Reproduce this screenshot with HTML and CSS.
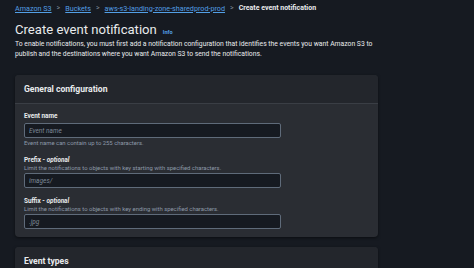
FILE: index.html
```html
<!DOCTYPE html>
<html lang="en">
<head>
    <meta charset="UTF-8">
    <meta name="viewport" content="width=device-width, initial-scale=1.0">
    <title>Create event notification</title>
    <link rel="stylesheet" href="styles.css">
</head>
<body>
    <div class="page">
        <nav class="breadcrumbs">
            <a href="#">Amazon S3</a>
            <span class="sep">&gt;</span>
            <a href="#">Buckets</a>
            <span class="sep">&gt;</span>
            <a href="#">aws-s3-landing-zone-sharedprod-prod</a>
            <span class="sep">&gt;</span>
            <span class="current">Create event notification</span>
        </nav>

        <div class="page-header">
            <h1>Create event notification</h1>
            <a href="#" class="info">Info</a>
        </div>
        <p class="intro">To enable notifications, you must first add a notification configuration that identifies the events you want Amazon S3 to publish and the destinations where you want Amazon S3 to send the notifications.</p>

        <section class="card">
            <div class="card-header">
                <h2>General configuration</h2>
            </div>
            <div class="card-body">
                <div class="field">
                    <label for="eventName">Event name</label>
                    <input type="text" id="eventName" placeholder="Event name">
                    <p class="hint">Event name can contain up to 255 characters.</p>
                </div>
                <div class="field">
                    <label for="prefix">Prefix - <i>optional</i></label>
                    <p class="desc">Limit the notifications to objects with key starting with specified characters.</p>
                    <input type="text" id="prefix" placeholder="images/">
                </div>
                <div class="field">
                    <label for="suffix">Suffix - <i>optional</i></label>
                    <p class="desc">Limit the notifications to objects with key ending with specified characters.</p>
                    <input type="text" id="suffix" placeholder=".jpg">
                </div>
            </div>
        </section>

        <section class="card">
            <div class="card-header">
                <h2>Event types</h2>
            </div>
        </section>
    </div>
</body>
</html>
```

FILE: styles.css
```css
body {
    font-family: Roboto, 'Open Sans', sans-serif;
    margin: 0;
    background-color: #161a21;
    color: #e9ebed;
    overflow: hidden;
}
.page {
    padding: 1px 96px 0 15px;
}
.breadcrumbs {
    display: flex;
    align-items: center;
    gap: 4px;
    font-size: 7.2px;
    height: 14px;
}
.breadcrumbs a {
    color: #539fe5;
    text-decoration: underline;
}
.breadcrumbs .sep {
    color: #7d8998;
    font-size: 7px;
    margin: 0 1px;
}
.breadcrumbs .current {
    font-weight: bold;
    font-size: 7px;
    color: #e9ebed;
}
.page-header {
    display: flex;
    align-items: baseline;
    gap: 6px;
    margin-top: 6px;
}
h1 {
    font-size: 13.1px;
    font-weight: normal;
    margin: 0;
    line-height: 18px;
}
.info {
    color: #539fe5;
    font-size: 5.5px;
    font-weight: bold;
    text-decoration: none;
}
.intro {
    font-size: 6.8px;
    line-height: 10px;
    margin: 0 0 16px;
}
.card {
    background-color: #2a2d33;
    border-radius: 4px;
    box-shadow: 0 1px 3px rgba(0, 0, 0, 0.5);
    margin-bottom: 10px;
}
.card-header {
    background-color: #23262c;
    border-bottom: 1px solid #3a3e45;
    border-radius: 4px 4px 0 0;
    padding: 0 9px;
    height: 28px;
    display: flex;
    align-items: center;
}
h2 {
    font-size: 8.6px;
    font-weight: bold;
    margin: 0;
}
.card-body {
    padding: 8px 9px 8px;
}
.field {
    margin-bottom: 9px;
}
.field:last-child {
    margin-bottom: 0;
}
label {
    display: block;
    font-size: 6.4px;
    font-weight: bold;
    line-height: 8px;
}
label i {
    font-weight: bold;
}
input[type="text"] {
    display: block;
    box-sizing: border-box;
    width: 257px;
    height: 15px;
    margin-top: 1px;
    padding: 0 4px;
    background-color: #161a21;
    border: 1px solid #5f6b7a;
    border-radius: 2px;
    color: #e9ebed;
    font-family: inherit;
    font-size: 6.5px;
}
.field:first-child input {
    margin-top: 3px;
}
input::placeholder {
    color: #7d8998;
    font-style: italic;
}
.hint, .desc {
    font-size: 5.9px;
    color: #8d99a8;
    margin: 0;
    line-height: 8px;
}
.hint {
    margin-top: 1px;
}
.desc {
    margin-bottom: 1px;
}
```
